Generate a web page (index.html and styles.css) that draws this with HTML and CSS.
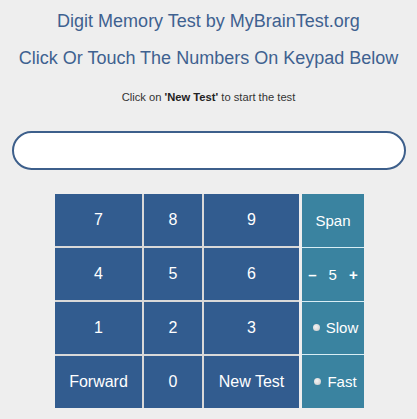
FILE: index.html
```html
<!DOCTYPE html>
<html>
<head>
<meta charset="utf-8">
<link rel="stylesheet" href="styles.css">
</head>
<body>
<div class="page">
  <h1 class="title">Digit Memory Test by MyBrainTest.org</h1>
  <h2 class="title subtitle">Click Or Touch The Numbers On Keypad Below</h2>
  <p class="hint">Click on <b>'New Test'</b> to start the test</p>
  <div class="display"></div>
  <div class="pad">
    <div class="keys">
      <div class="key">7</div><div class="key">8</div><div class="key">9</div>
      <div class="key">4</div><div class="key">5</div><div class="key">6</div>
      <div class="key">1</div><div class="key">2</div><div class="key">3</div>
      <div class="key">Forward</div><div class="key">0</div><div class="key">New Test</div>
    </div>
    <div class="side">
      <div class="opt">Span</div>
      <div class="opt span"><b>–</b><span>5</span><b>+</b></div>
      <div class="opt radio"><i class="dot"></i>Slow</div>
      <div class="opt radio"><i class="dot"></i>Fast</div>
    </div>
  </div>
</div>
</body>
</html>
```
FILE: styles.css
```css
html, body {
  margin: 0;
  padding: 0;
  background: #eeeeee;
  font-family: "Liberation Sans", Arial, sans-serif;
}
.page {
  width: 417px;
  height: 419px;
  overflow: hidden;
  display: flex;
  flex-direction: column;
  align-items: center;
}
.title {
  margin: 11px 0 0;
  font-size: 18px;
  font-weight: normal;
  color: #3e6190;
  line-height: 21px;
  text-align: center;
}
.subtitle {
  margin-top: 16px;
}
.hint {
  margin: 22px 0 0;
  font-size: 11.2px;
  line-height: 13px;
  color: #333333;
}
.hint b {
  color: #222;
}
.display {
  margin-top: 27px;
  width: 390px;
  height: 35px;
  background: #ffffff;
  border: 2px solid #3d5f8b;
  border-radius: 20px;
}
.pad {
  margin-top: 24px;
  display: flex;
  gap: 3px;
  margin-left: 2px;
}
.keys {
  display: grid;
  grid-template-columns: 87px 58px 95px;
  grid-auto-rows: 52px;
  gap: 2px;
  background: #d9d9d9;
}
.key {
  background: #325c8f;
  color: #ffffff;
  font-size: 16px;
  display: flex;
  align-items: center;
  justify-content: center;
}
.side {
  width: 62px;
  display: flex;
  flex-direction: column;
  gap: 1px;
  background: #d8eef5;
}
.opt {
  flex: 1;
  background: #3a83a0;
  color: #ffffff;
  font-size: 15px;
  display: flex;
  align-items: center;
  justify-content: center;
}
.span {
  gap: 12px;
}
.span b {
  font-size: 15px;
}
.radio {
  gap: 6px;
  padding-left: 5px;
}
.dot {
  width: 7px;
  height: 7px;
  border-radius: 50%;
  background: radial-gradient(circle at 40% 40%, #f4f4f4, #c9c9c9);
}
```
